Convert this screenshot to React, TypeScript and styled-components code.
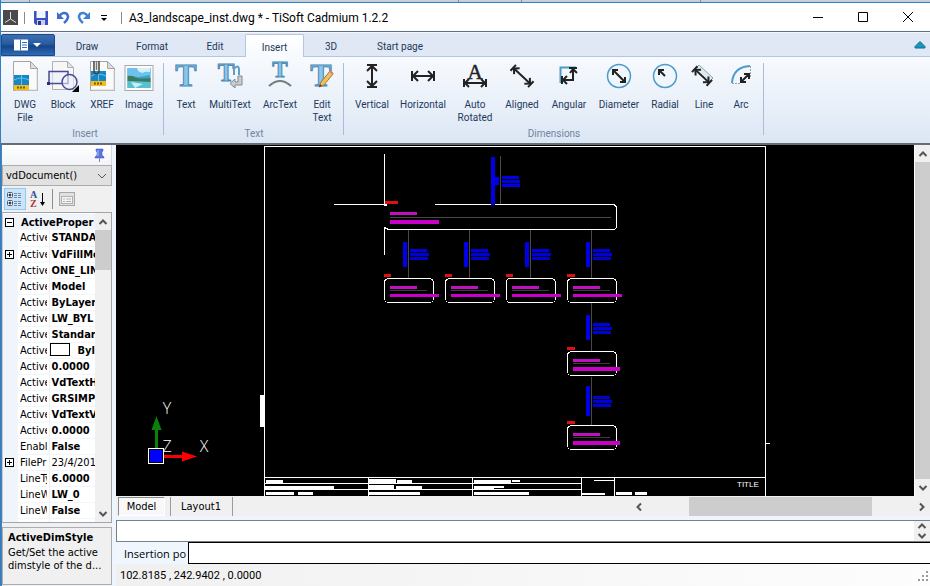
import React from 'react';
import styled, { createGlobalStyle, css } from 'styled-components';

const UI = `'Roboto', 'Open Sans', sans-serif`;
const FORM = `'DejaVu Sans Condensed', 'DejaVu Sans', sans-serif`;

const GlobalStyle = createGlobalStyle`
  * { box-sizing: border-box; }
  body { margin: 0; background: #f0f0f0; font-family: ${UI}; font-size: 11px; color: #000; }
  button, input, select { font: inherit; color: inherit; margin: 0; padding: 0; border: 0; background: none; border-radius: 0; }
  svg { display: block; flex: none; overflow: visible; }
`;

/* ---------- window ---------- */
const Window = styled.div`
  display: flex;
  flex-direction: column;
  height: 100vh;
  overflow: hidden;
  border-left: 1px solid #2f7fc4;
  background: #eff5fc;
`;
const Backdrop = styled.div`
  display: flex;
  flex: none;
  height: 3px;
  background: #c6cfdb;
  border-bottom: 1px solid #3480bf;
`;
const BackdropTab = styled.span<{ $width: number }>`
  width: ${p => p.$width}px;
  border-right: 1px solid #8494a8;
`;
const TitleBar = styled.header`
  display: flex;
  flex: none;
  align-items: center;
  height: 29px;
  padding: 2px 0 0 2px;
  background: #fff;
  border-bottom: 1px solid #5e6f88;
`;
const QuickButton = styled.button<{ $width: number }>`
  display: flex;
  justify-content: center;
  align-items: center;
  width: ${p => p.$width}px;
  height: 20px;
`;
const Divider = styled.span`
  width: 1px;
  height: 12px;
  margin: 0 7px 0 5px;
  background: #8a8a8a;
`;
const Title = styled.h1`
  flex: 1;
  margin: 0;
  font-size: 12px;
  line-height: 20px;
  font-weight: 400;
  white-space: nowrap;
`;
const WindowButton = styled.button`
  display: flex;
  align-self: flex-start;
  justify-content: center;
  align-items: center;
  width: 45px;
  height: 24px;
`;

/* ---------- ribbon ---------- */
const TabBar = styled.nav`
  display: flex;
  flex: none;
  align-items: flex-end;
  height: 25px;
  padding-right: 4px;
  background: #dfe8f4;
  border-top: 1px solid #f4f7fb;
  border-bottom: 1px solid #b5c7de;
`;
const AppButton = styled.button`
  display: flex;
  align-items: center;
  justify-content: center;
  gap: 5px;
  width: 54px;
  height: 22px;
  padding-right: 2px;
  background: linear-gradient(#3b6eb0, #2a5ba3 45%, #164489 55%, #2f6cb5);
  border: 1px solid #1d4785;
  border-radius: 2px 2px 0 0;
`;
const Tab = styled.button<{ $width: number; $active?: boolean }>`
  width: ${p => p.$width}px;
  height: 22px;
  padding-top: 2px;
  font-size: 10px;
  color: #1e395b;
  ${p => p.$active && css`
    height: 23px;
    margin-bottom: -1px;
    background: linear-gradient(#fff, #f6fafe);
    border: 1px solid #b5c7de;
    border-bottom: 0;
    border-radius: 2px 2px 0 0;
  `}
`;
const Spacer = styled.span`
  flex: 1;
`;
const CollapseButton = styled.button`
  display: flex;
  align-items: center;
  justify-content: center;
  width: 12px;
  height: 22px;
`;
const Ribbon = styled.div`
  display: flex;
  flex: none;
  height: 88px;
  padding-left: 5px;
  background: linear-gradient(#f7fafe, #e9f0f9 55%, #dbe6f4);
  border-bottom: 2px solid #656d78;
`;
const Group = styled.section`
  display: flex;
  flex-direction: column;
  position: relative;
  padding: 4px 4px 0;
  &::after {
    content: '';
    position: absolute;
    right: 0;
    top: 6px;
    bottom: 8px;
    width: 1px;
    background: #a9bcd8;
  }
`;
const Tools = styled.div`
  display: flex;
  height: 66px;
`;
const Tool = styled.button<{ $width: number }>`
  display: flex;
  flex-direction: column;
  align-items: center;
  width: ${p => p.$width}px;
  font-size: 10px;
  line-height: 13px;
  color: #1e395b;
`;
const ToolLabel = styled.span`
  display: block;
  margin-top: 5px;
  white-space: pre-line;
  text-align: center;
`;
const GroupName = styled.h2`
  margin: 0;
  font-size: 10px;
  line-height: 13px;
  font-weight: 400;
  text-align: center;
  color: #73849e;
`;

/* ---------- properties ---------- */
const Body = styled.div`
  display: flex;
  flex: 1;
  min-height: 0;
`;
const Side = styled.aside`
  display: flex;
  flex-direction: column;
  flex: none;
  width: 111px;
  padding-bottom: 1px;
  background: #f0f0f0;
  border-left: 1px solid #4d80ae;
  font-family: ${FORM};
`;
const PanelHead = styled.div`
  display: flex;
  justify-content: flex-end;
  align-items: center;
  height: 20px;
  padding-right: 5px;
  background: linear-gradient(#fff, #f2f4f9);
  border-right: 1px solid #d4d8e0;
`;
const SelectBox = styled.label`
  display: grid;
  height: 21px;
  background: #e1e1e1;
  border: 1px solid #acacac;
  align-items: center;
  svg { grid-area: 1 / 1; justify-self: end; margin-right: 4px; pointer-events: none; }
`;
const Select = styled.select`
  grid-area: 1 / 1;
  width: 100%;
  height: 19px;
  padding-left: 3px;
  appearance: none;
`;
const PanelTools = styled.div`
  display: flex;
  align-items: center;
  gap: 1px;
  height: 26px;
  padding-left: 2px;
`;
const PanelTool = styled.button<{ $active?: boolean }>`
  display: flex;
  align-items: center;
  justify-content: center;
  width: 22px;
  height: 22px;
  border: 1px solid ${p => (p.$active ? '#90c8f6' : 'transparent')};
  background: ${p => (p.$active ? '#cce4f7' : 'transparent')};
`;
const PanelRule = styled.span`
  width: 1px;
  height: 20px;
  margin: 0 2px;
  background: #8c8c8c;
`;
const GridBox = styled.div`
  display: flex;
  flex: 1;
  min-height: 0;
  overflow: hidden;
  background: #fff;
  border: 1px solid #a0a4ab;
  border-left-color: #c5cad3;
`;
const GridClip = styled.div`
  flex: 1;
  min-width: 0;
  overflow: hidden;
`;
const PropTable = styled.table`
  width: 100%;
  table-layout: fixed;
  border-collapse: collapse;
  margin-top: 1px;
`;
const PropCell = styled.td<{ $kind: 'mark' | 'name' | 'value' | 'plain' | 'head' }>`
  height: 16px;
  padding: 0;
  overflow: hidden;
  white-space: nowrap;
  line-height: 15px;
  ${p => p.$kind === 'mark' && css`width: 15px; background: #f0f5fb; padding-left: 2px;`}
  ${p => p.$kind === 'name' && css`width: 31px; border-right: 1px solid #edf1f7; border-bottom: 1px solid #f2f5f9; padding-left: 2px;`}
  ${p => (p.$kind === 'value' || p.$kind === 'plain') && css`padding-left: 2px; border-bottom: 1px solid #f2f5f9;`}
  ${p => p.$kind === 'value' && css`font-weight: 700;`}
  ${p => p.$kind === 'head' && css`padding-left: 3px; font-weight: 700; background: #f0f5fb;`}
`;
const NameText = styled.span`
  display: block;
  width: 27px;
  overflow: hidden;
`;
const Expander = styled.button`
  display: flex;
  width: 9px;
  height: 9px;
  background: #fff;
  border: 1px solid #000;
`;
const Swatch = styled.span`
  display: inline-block;
  width: 20px;
  height: 13px;
  margin: 0 8px 0 -2px;
  border: 1px solid #000;
  vertical-align: top;
`;
const Help = styled.div`
  flex: none;
  height: 58px;
  margin-top: 4px;
  padding: 3px 5px;
  border: 1px solid #a9adb4;
  line-height: 13px;
`;
const HelpTitle = styled.strong`
  display: block;
  margin-bottom: 2px;
`;

/* ---------- scroll bars ---------- */
const VScroll = styled.div<{ $width: number }>`
  display: flex;
  flex-direction: column;
  flex: none;
  width: ${p => p.$width}px;
  background: #f0f0f0;
`;
const ScrollButton = styled.button<{ $size: number }>`
  display: flex;
  flex: none;
  align-items: center;
  justify-content: center;
  width: 100%;
  height: ${p => p.$size}px;
`;
const VThumb = styled.div<{ $rest: number }>`
  flex: 1;
  min-height: 0;
  background: #cdcdcd;
  margin-bottom: ${p => p.$rest}px;
`;
const HScroll = styled.div`
  display: flex;
  flex: 0 1 299px;
  height: 19px;
`;
const HArrow = styled.button`
  display: flex;
  align-items: center;
  justify-content: center;
  width: 16px;
  height: 20px;
`;
const HTrack = styled.div`
  flex: 1;
  padding: 0 14%;
`;
const HThumb = styled.div`
  height: 19px;
  background: #cdcdcd;
`;

/* ---------- work area ---------- */
const Work = styled.main`
  display: flex;
  flex-direction: column;
  flex: 1;
  min-width: 0;
  margin-left: 4px;
`;
const Stage = styled.div`
  display: flex;
  flex: 1;
  min-height: 0;
  background: #000;
  overflow: hidden;
`;
const Canvas = styled.div`
  flex: 1;
  min-width: 0;
  overflow: hidden;
  border-right: 1px solid #fff;
`;
const Sheets = styled.div`
  display: flex;
  flex: none;
  height: 20px;
  padding-top: 1px;
  padding-left: 2px;
  background: #f0f0f0;
  font-family: ${FORM};
`;
const Sheet = styled.button<{ $width: number; $active?: boolean }>`
  width: ${p => p.$width}px;
  height: 19px;
  border-right: 1px solid #9b9b9b;
  ${p => p.$active && css`
    margin-right: 5px;
    background: #f8f8f8;
    border: 1px solid #8a8a8a;
    border-right-color: #fff;
    border-bottom-color: #fff;
    box-shadow: 5px 0 0 #f0f0f0, 6px 0 0 #9b9b9b;
  `}
`;
const Command = styled.div`
  display: flex;
  flex: none;
  height: 22px;
  margin-top: 4px;
  background: #fff;
  border: 1px solid #7a7f87;
  border-right: 0;
`;
const CommandInput = styled.input`
  flex: 1;
  min-width: 0;
  padding: 0 4px;
`;
const Prompt = styled.label`
  display: flex;
  flex: none;
  align-items: center;
  height: 22px;
  padding-left: 8px;
  background: #eff6fe;
  font-family: 'Open Sans', sans-serif;
`;
const PromptText = styled.span`
  width: 64px;
  white-space: nowrap;
`;
const PromptInput = styled.input`
  flex: 1;
  min-width: 0;
  height: 22px;
  padding: 0 4px;
  background: #fff;
  border: 1px solid #000;
  border-right: 0;
`;
const Status = styled.footer`
  display: flex;
  flex: none;
  align-items: center;
  justify-content: space-between;
  height: 22px;
  padding: 0 1px 0 4px;
  background: linear-gradient(90deg, #f0f0f0, #fdfdfd);
`;

/* ---------- icons ---------- */
const INK = '#222';
const SKY = '#4d9bcb';

function Icon({ children, size = 32 }: { children: React.ReactNode; size?: number }) {
  return <svg width={size} height={size} viewBox={`0 0 ${size} ${size}`} aria-hidden="true">{children}</svg>;
}

function Page() {
  return (
    <g>
      <path d="M4.500 .5h17l7 7v22h-24z" fill="#fafafa" stroke="#a5a5a5" />
      <path d="M6 29h22M28 9v20" stroke="#d5d5d5" fill="none" />
      <path d="M21.500 .5v7h7z" fill="#dedede" stroke="#a5a5a5" />
    </g>
  );
}

function DwgBadge({ y }: { y: number }) {
  return (
    <g>
      <rect x="5" y={y} width="15" height="10" fill="#1687c4" />
      <path d={`M5 ${y + 5}q7 -4 15 0M12.500 ${y}v10`} stroke="#5fc3ee" fill="none" />
      <rect x="5" y={y + 10} width="15" height="5" fill="#f2bd1d" />
      <path d={`M8 ${y + 12.5}h9`} stroke="#7a5c05" strokeWidth="2" strokeDasharray="2 1" />
    </g>
  );
}

function BlueT({ x, y, size }: { x: number; y: number; size: number }) {
  return (
    <text x={x} y={y} fontFamily="'Liberation Serif', serif" fontWeight="700" fontSize={size} textAnchor="middle"
      fill="#8ac6ea" stroke="#4a87b5" strokeWidth="1">T</text>
  );
}

/* Double-headed dimension arrow centred on the origin, pointing along x. */
function DimArrow({ half, head = 5 }: { half: number; head?: number }) {
  return (
    <g stroke={INK} strokeWidth="2" fill="none">
      <path d={`M${-half + 1} 0H${half - 1}`} />
      <path d={`M${-half + 1 + head} ${-head}L${-half + 1} 0l${head} ${head}M${half - 1 - head} ${-head}L${half - 1} 0l${-head} ${head}`} />
      <path d={`M${-half} ${-head}v${head * 2}M${half} ${-head}v${head * 2}`} />
    </g>
  );
}

const icons: Record<string, React.ReactNode> = {
  dwg: <><Page /><DwgBadge y={14} /></>,
  block: (
    <>
      <path d="M5.500 .5h15l6 6v22h-21z" fill="#f7f7f7" stroke="#b0b0b0" />
      <path d="M20.500 .5v6h6z" fill="#e4e4e4" stroke="#b0b0b0" />
      <rect x="2" y="10.500" width="19" height="12" fill="#eef0fa" fillOpacity=".6" stroke="#4a4a94" strokeWidth="1.500" />
      <circle cx="22.500" cy="21" r="7.500" fill="#eef0fa" fillOpacity=".6" stroke="#4a4a94" strokeWidth="1.500" />
      <rect x="0" y="21" width="3" height="3" fill="#2d2d80" />
      <path d="M32 24v7h-7z" fill="#000" />
    </>
  ),
  xref: (
    <>
      <Page /><DwgBadge y={10} />
      <path d="M8 0v10q0 3 2.500 3t2.500 -3V0" stroke="#444" strokeWidth="1.500" fill="none" />
      <path d="M10.500 0v9" stroke="#777" strokeWidth="1.500" />
    </>
  ),
  image: (
    <>
      <rect x="2" y="4.500" width="28" height="25" fill="#fcfcfc" stroke="#a8a8a8" />
      <rect x="4.500" y="7" width="23" height="20" fill="#3aa0d8" />
      <path d="M4.500 7h23v7l-12 2l-11 -1z" fill="#6cc2ec" />
      <path d="M14 7l13 0v4q-6 -1 -7 1q-6 -1 -6 -5z" fill="#d5f0fa" />
      <path d="M4.500 15q5 -1 9 2q6 1 14 0v4l-23 -1z" fill="#3d7a58" />
      <path d="M4.500 20l23 1v6h-23z" fill="#57c0cf" />
      <path d="M8 21l12 2l-8 4z" fill="#c6eff0" />
    </>
  ),
  text: <BlueT x={16} y={25} size={32} />,
  multi: (
    <>
      <BlueT x={12} y={20} size={25} />
      <path d="M20 5v9M20 8q4 -5 5 0v6" stroke="#5f9fca" strokeWidth="2" fill="none" />
      <path d="M24 15h4v9h-7v3l-5 -4.500l5 -4.500v3h3z" fill="#c9ced1" stroke="#83898c" />
    </>
  ),
  arc: (
    <>
      <BlueT x={16} y={16} size={23} />
      <path d="M5 25q11 -10 22 0" stroke="#777c80" strokeWidth="2" fill="none" />
    </>
  ),
  edit: (
    <>
      <BlueT x={15} y={25} size={32} />
      <path d="M13 26l2 -5l9 -11l3 3l-9 11z" fill="#f0c060" stroke="#a9742c" />
      <path d="M13 26l1 -3l2 2z" fill="#444" />
      <path d="M24 10l3 3" stroke="#d77d77" strokeWidth="2" />
    </>
  ),
  vertical: <g transform="translate(16 15) rotate(90)"><DimArrow half={11} /></g>,
  horizontal: <g transform="translate(16 15)"><DimArrow half={11} /></g>,
  rotated: (
    <>
      <text x="16" y="18" textAnchor="middle" fontFamily="'Liberation Serif', serif" fontSize="21" fill="#222" stroke="#222" strokeWidth=".5">A</text>
      <g transform="translate(16 22)"><DimArrow half={11} head={4} /></g>
    </>
  ),
  aligned: <g transform="translate(16 15) rotate(43)"><DimArrow half={12} head={4} /></g>,
  angular: (
    <>
      <path d="M7.500 22V6.500H23" stroke={SKY} strokeWidth="2" fill="none" />
      <path d="M20 9v10H11" stroke={INK} strokeWidth="2" fill="none" />
      <path d="M17 12l3 -4l4 4M14 15l-4 4l4 4M16 7h8M9 15v8" stroke={INK} strokeWidth="2" fill="none" />
    </>
  ),
  diameter: (
    <>
      <circle cx="16" cy="15" r="11.500" fill="#eff7fc" stroke={SKY} strokeWidth="1.500" />
      <path d="M10 9l12 12M10 14V9h5M22 16v5h-5" stroke={INK} strokeWidth="2" fill="none" />
    </>
  ),
  radial: (
    <>
      <circle cx="16" cy="15" r="11.500" fill="#eff7fc" stroke={SKY} strokeWidth="1.500" />
      <path d="M10 9l6 6M10 14V9h5" stroke={INK} strokeWidth="2" fill="none" />
    </>
  ),
  line: (
    <>
      <path d="M11 4l14 13l-4 4L7 8z" fill="#dfeaf0" stroke="#8ba5b3" />
      <g transform="translate(14 15) rotate(43)"><DimArrow half={10} head={4} /></g>
    </>
  ),
  arcdim: (
    <>
      <path d="M7 22Q8 6 25 5" stroke={SKY} strokeWidth="2" fill="none" />
      <path d="M25.500 5v12M7 22.500h9" stroke="#9aa3aa" strokeDasharray="2 1" />
      <path d="M16 21l8 -8M19 13h5v5M16 16v5h5" stroke={INK} strokeWidth="2" fill="none" />
    </>
  ),
};

function Chevron({ dir }: { dir: 'up' | 'down' | 'left' | 'right' }) {
  const d = { up: 'M1.500 7l3.500 -3.500l3.500 3.500', down: 'M1.500 3l3.500 3.500l3.500 -3.500', left: 'M7 1.500l-3.500 3.500l3.500 3.500', right: 'M3 1.500l3.500 3.500l-3.500 3.500' }[dir];
  return <Icon size={10}><path d={d} stroke="#555" strokeWidth="2" fill="none" /></Icon>;
}

/* ---------- data ---------- */
type ToolDef = [icon: string, label: string, width: number];
const groups: { name: string; tools: ToolDef[] }[] = [
  { name: 'Insert', tools: [['dwg', 'DWG\nFile', 30], ['block', 'Block', 46], ['xref', 'XREF', 32], ['image', 'Image', 42]] },
  { name: 'Text', tools: [['text', 'Text', 36], ['multi', 'MultiText', 52], ['arc', 'ArcText', 48], ['edit', 'Edit\nText', 36]] },
  {
    name: 'Dimensions',
    tools: [['vertical', 'Vertical', 48], ['horizontal', 'Horizontal', 54], ['rotated', 'Auto\nRotated', 50], ['aligned', 'Aligned', 44],
      ['angular', 'Angular', 50], ['diameter', 'Diameter', 50], ['radial', 'Radial', 42], ['line', 'Line', 36], ['arcdim', 'Arc', 38]],
  },
];

const properties: { name: string; value: string; expand?: boolean; plain?: boolean; swatch?: boolean }[] = [
  { name: 'Active', value: 'STANDA' },
  { name: 'Active', value: 'VdFillMo', expand: true },
  { name: 'Active', value: 'ONE_LIN' },
  { name: 'Active', value: 'Model' },
  { name: 'Active', value: 'ByLayer' },
  { name: 'Active', value: 'LW_BYL' },
  { name: 'Active', value: 'Standar' },
  { name: 'Active', value: 'Byl', swatch: true },
  { name: 'Active', value: '0.0000' },
  { name: 'Active', value: 'VdTextH' },
  { name: 'Active', value: 'GRSIMP' },
  { name: 'Active', value: 'VdTextV' },
  { name: 'Active', value: '0.0000' },
  { name: 'Enabl', value: 'False' },
  { name: 'FilePr', value: '23/4/201', expand: true, plain: true },
  { name: 'LineTy', value: '6.0000' },
  { name: 'LineW', value: 'LW_0' },
  { name: 'LineW', value: 'False' },
  { name: 'Ortho', value: 'None' },
];

/* ---------- drawing ---------- */
function Block({ x, y, red = 7, wide = 49 }: { x: number; y: number; red?: number; wide?: number }) {
  return (
    <g>
      <rect x={x + .5} y={y + .5} width="49" height="24" rx="4" fill="none" stroke="#fff" />
      <rect x={x} y={y - 4} width={red} height="3" fill="#e01010" />
      <rect x={x + 6} y={y + 12} width="37" height="1" fill="#3c3c3c" />
      <rect x={x + 6} y={y + 8} width="27" height="3" fill="#c010c0" />
      <rect x={x + 6} y={y + 16} width={wide} height={wide > 48 ? 3 : 4} fill="#c800c8" />
    </g>
  );
}

function Link({ x, y, length, bar, barLength, notes }: {
  x: number; y: number; length: number; bar: number; barLength: number; notes: number;
}) {
  return (
    <g>
      <rect x={x} y={y} width="1" height={length} fill="#484848" />
      <rect x={x - 5} y={bar} width="4" height={barLength} fill="#0000e8" />
      <rect x={x + 2} y={notes} width="17" height="3" fill="#0000d8" />
      <rect x={x + 2} y={notes + 4} width="19" height="3" fill="#0000d8" />
      <rect x={x + 2} y={notes + 8} width="18" height="3" fill="#0000d8" />
    </g>
  );
}

const tableMarks: [number, number, number, number][] = [
  [266, 480, 17, 3], [264, 486, 70, 3], [266, 492, 28, 3], [298, 492, 15, 3],
  [369, 479, 27, 4], [397, 480, 15, 3], [369, 485, 25, 4], [396, 486, 26, 3], [369, 492, 51, 3],
  [474, 480, 37, 3], [512, 480, 8, 2], [474, 486, 20, 3], [494, 486, 10, 2], [474, 492, 55, 3],
  [582, 493, 23, 2], [594, 480, 20, 1], [616, 492, 16, 3], [635, 492, 12, 3],
];

function Drawing() {
  return (
    <svg width="100%" height="100%" viewBox="116 145 798 351" preserveAspectRatio="xMinYMin meet" shapeRendering="crispEdges" role="img" aria-label="Drawing">
      <g fill="#fff">
        <rect x="264" y="146" width="502" height="1" />
        <rect x="264" y="146" width="1" height="350" />
        <rect x="765" y="146" width="1" height="350" />
        <rect x="260" y="395" width="4" height="32" />
        <rect x="766" y="443" width="4" height="1" />
        <rect x="384" y="154" width="1" height="52" />
        <rect x="384" y="228" width="1" height="27" />
        <rect x="334" y="204" width="52" height="1" />
        <rect x="384" y="203" width="3" height="3" />
        <rect x="264" y="477" width="502" height="1" />
        <rect x="264" y="483" width="318" height="1" />
        <rect x="264" y="489" width="318" height="1" />
        <rect x="368" y="477" width="1" height="19" />
        <rect x="472" y="477" width="1" height="19" />
        <rect x="581" y="477" width="1" height="19" />
        <rect x="614" y="477" width="1" height="19" />
        {tableMarks.map(([x, y, w, h]) => <rect key={`${x}-${y}`} x={x} y={y} width={w} height={h} />)}
      </g>
      <text x="737" y="487" fontFamily="'Liberation Sans', sans-serif" fontSize="8" fill="#fff">TITLE</text>

      <path d="M435 204.500H612.500q4 0 4 4v17q0 4 -4 4H388.500l-4 -2" fill="none" stroke="#fff" />
      <rect x="390" y="217" width="221" height="1" fill="#484848" />
      <rect x="385" y="201" width="13" height="3" fill="#e01010" />
      <rect x="390" y="212" width="27" height="3" fill="#c010c0" />
      <rect x="390" y="220" width="49" height="4" fill="#c800c8" />
      <rect x="500" y="156" width="1" height="48" fill="#484848" />
      <g fill="#0000e8">
        <rect x="491" y="157" width="4" height="48" />
        <rect x="495" y="177" width="4" height="8" />
        <rect x="502" y="176" width="17" height="3" />
        <rect x="502" y="180" width="18" height="3" />
        <rect x="502" y="184" width="18" height="3" />
      </g>

      <Link x={408} y={230} length={48} bar={242} barLength={25} notes={249} />
      <Link x={469} y={230} length={48} bar={242} barLength={25} notes={249} />
      <Link x={530} y={230} length={48} bar={242} barLength={25} notes={249} />
      <Link x={591} y={230} length={48} bar={242} barLength={25} notes={249} />
      <Link x={591} y={303} length={48} bar={315} barLength={25} notes={323} />
      <Link x={591} y={377} length={48} bar={386} barLength={30} notes={396} />
      <Block x={384} y={278} />
      <Block x={445} y={278} />
      <Block x={506} y={278} />
      <Block x={567} y={278} red={8} />
      <Block x={567} y={351} red={8} wide={47} />
      <Block x={567} y={425} red={8} wide={47} />

      <g shapeRendering="auto">
        <rect x="155" y="430" width="3" height="19" fill="#0a7f0a" />
        <path d="M156.500 416l5 14h-10z" fill="#0a7f0a" />
        <rect x="164" y="455" width="18" height="3" fill="#f00" />
        <path d="M197 456.500l-15 -5v10z" fill="#f00" />
        <rect x="148.500" y="448.500" width="15" height="15" fill="#000" stroke="#fff" />
        <rect x="150" y="450" width="12" height="12" fill="#00f" />
        <g fontFamily="'Open Sans', sans-serif" fontWeight="300" fontSize="16" fill="#fff" textAnchor="middle">
          <text x="167" y="414">Y</text>
          <text x="167" y="452">Z</text>
          <text x="204" y="452">X</text>
        </g>
      </g>
    </svg>
  );
}

export default function App() {
  return (
    <>
      <GlobalStyle />
      <Window>
        <Backdrop>
          <BackdropTab $width={29} /><BackdropTab $width={429} /><BackdropTab $width={63} /><BackdropTab $width={179} />
        </Backdrop>
        <TitleBar>
          <Icon size={16}>
            <rect width="15" height="15" fill="#4a4a4a" />
            <path d="M7.500 2v7L2 12.500M7.500 9l5.500 3.500" stroke="#ddd" fill="none" />
          </Icon>
          <Divider />
          <QuickButton $width={18} aria-label="Save">
            <Icon size={16}>
              <path d="M1 1h14v14H3l-2 -2z" fill="#3b50c0" />
              <path d="M3.500 1h9v7h-9z" fill="#f2f5ff" />
              <path d="M4 10h8v5H4z" fill="#c5cdf2" /><path d="M5 11h3v4H5z" fill="#26368f" />
            </Icon>
          </QuickButton>
          <QuickButton $width={26} aria-label="Undo">
            <Icon size={16}>
              <path d="M4 6.500Q8 1 12 4q3 4 -3 9" stroke="#3a6fd0" strokeWidth="2.500" fill="none" />
              <path d="M2 2v7h7z" fill="#3a6fd0" />
            </Icon>
          </QuickButton>
          <QuickButton $width={16} aria-label="Redo">
            <Icon size={16}>
              <path d="M12 6.500Q8 1 4 4q-3 4 3 9" stroke="#3f82d2" strokeWidth="2.500" fill="none" />
              <path d="M14 2v7H7z" fill="#3f82d2" />
            </Icon>
          </QuickButton>
          <QuickButton $width={24} aria-label="Customize">
            <Icon size={8}><path d="M1 1.500h6" stroke="#000" /><path d="M1 4h6l-3 3z" /></Icon>
          </QuickButton>
          <Divider />
          <Title>A3_landscape_inst.dwg * - TiSoft Cadmium 1.2.2</Title>
          <WindowButton aria-label="Minimize"><Icon size={12}><path d="M1 6.500h10" stroke="#000" /></Icon></WindowButton>
          <WindowButton aria-label="Maximize"><Icon size={12}><path d="M1.500 1.500h9v9h-9z" stroke="#000" fill="none" /></Icon></WindowButton>
          <WindowButton aria-label="Close"><Icon size={12}><path d="M1 1l10 10M11 1L1 11" stroke="#000" /></Icon></WindowButton>
        </TitleBar>

        <TabBar>
          <AppButton aria-label="Application menu">
            <Icon size={14}>
              <path d="M0 1.500h14v11H0z" fill="#fff" /><path d="M6.500 1.500v11" stroke="#3b6eb0" />
              <path d="M8 4.500h5M8 7h5M8 9.500h5" stroke="#3b6eb0" />
            </Icon>
            <Icon size={8}><path d="M0 2h8l-4 4z" fill="#fff" /></Icon>
          </AppButton>
          <Tab $width={64}>Draw</Tab>
          <Tab $width={66}>Format</Tab>
          <Tab $width={60}>Edit</Tab>
          <Tab $width={59} $active>Insert</Tab>
          <Tab $width={54}>3D</Tab>
          <Tab $width={84}>Start page</Tab>
          <Spacer />
          <CollapseButton aria-label="Collapse ribbon">
            <Icon size={12}><path d="M1 9V7.500l5 -5l5 5V9z" fill="#1c96b8" stroke="#0d6d92" /></Icon>
          </CollapseButton>
        </TabBar>

        <Ribbon>
          {groups.map(g => (
            <Group key={g.name}>
              <Tools>
                {g.tools.map(([icon, label, width]) => (
                  <Tool key={label} $width={width}>
                    <Icon>{icons[icon]}</Icon>
                    <ToolLabel>{label}</ToolLabel>
                  </Tool>
                ))}
              </Tools>
              <GroupName>{g.name}</GroupName>
            </Group>
          ))}
        </Ribbon>

        <Body>
          <Side>
            <PanelHead>
              <Icon size={14}>
                <path d="M4 1h7v2l-1 1v3l2 2v1H3V9l2 -2V4L4 3z" fill="#5a74e0" stroke="#3c55bd" strokeWidth=".5" />
                <path d="M6 2v6" stroke="#a9b9ff" /><path d="M7.500 10v4" stroke="#808aa8" />
              </Icon>
            </PanelHead>
            <SelectBox>
              <Select aria-label="Object" defaultValue="doc"><option value="doc">vdDocument()</option></Select>
              <Icon size={10}><path d="M1 3l4 4l4 -4" stroke="#555" fill="none" /></Icon>
            </SelectBox>
            <PanelTools>
              <PanelTool $active aria-label="Categorized">
                <Icon size={18}>
                  <g fill="#fff" stroke="#3d5d8c"><rect x="1.500" y="2.500" width="5" height="5" rx="1" /><rect x="1.500" y="10.500" width="5" height="5" rx="1" /></g>
                  <path d="M2.500 5h3M4 3.500v3M2.500 13h3M4 11.500v3" stroke="#000" />
                  <path d="M8 3.500h8M8 5.500h8M8 7.500h8M8 11.500h8M8 13.500h8M8 15.500h8" stroke="#6d89ad" strokeDasharray="3 1" />
                </Icon>
              </PanelTool>
              <PanelTool aria-label="Alphabetical">
                <Icon size={18}>
                  <g fontFamily="'Liberation Serif', serif" fontWeight="700" fontSize="10">
                    <text x="1" y="8" fill="#2e4e9e">A</text><text x="1" y="17" fill="#a33a3a">Z</text>
                  </g>
                  <path d="M13.500 3v12" stroke="#000" /><path d="M11 12h5l-2.500 4z" />
                </Icon>
              </PanelTool>
              <PanelRule />
              <PanelTool aria-label="Property pages">
                <Icon size={18}>
                  <rect x="1.500" y="2.500" width="15" height="13" fill="#e0e0e0" stroke="#a8a8a8" />
                  <rect x="3.500" y="6.500" width="11" height="7" fill="#f6f6f6" stroke="#b0b0b0" />
                  <path d="M5 9h2M8 9h5M5 11.500h2M8 11.500h5" stroke="#b0b0b0" />
                </Icon>
              </PanelTool>
            </PanelTools>
            <GridBox>
              <GridClip>
                <PropTable>
                  <colgroup><col width="15" /><col width="31" /><col /></colgroup>
                  <tbody>
                    <tr>
                      <PropCell $kind="mark"><Expander aria-label="Collapse"><Icon size={7}><path d="M1 3.500h5" stroke="#000" /></Icon></Expander></PropCell>
                      <PropCell $kind="head" colSpan={2}>ActiveProper</PropCell>
                    </tr>
                    {properties.map((p, i) => (
                      <tr key={i}>
                        <PropCell $kind="mark">
                          {p.expand && <Expander aria-label={`Expand ${p.name}`}><Icon size={7}><path d="M1 3.500h5M3.500 1v5" stroke="#000" /></Icon></Expander>}
                        </PropCell>
                        <PropCell $kind="name"><NameText>{p.name}</NameText></PropCell>
                        <PropCell $kind={p.plain ? 'plain' : 'value'}>{p.swatch && <Swatch />}{p.value}</PropCell>
                      </tr>
                    ))}
                  </tbody>
                </PropTable>
              </GridClip>
              <VScroll $width={16}>
                <ScrollButton $size={17} aria-label="Scroll up"><Chevron dir="up" /></ScrollButton>
                <VThumb $rest={235} />
                <ScrollButton $size={17} aria-label="Scroll down"><Chevron dir="down" /></ScrollButton>
              </VScroll>
            </GridBox>
            <Help>
              <HelpTitle>ActiveDimStyle</HelpTitle>
              Get/Set the active dimstyle of the d...
            </Help>
          </Side>

          <Work>
            <Stage>
              <Canvas><Drawing /></Canvas>
              <VScroll $width={15}>
                <ScrollButton $size={17} aria-label="Scroll up"><Chevron dir="up" /></ScrollButton>
                <VThumb $rest={0} />
                <ScrollButton $size={17} aria-label="Scroll down"><Chevron dir="down" /></ScrollButton>
              </VScroll>
            </Stage>
            <Sheets>
              <Sheet $width={47} $active>Model</Sheet>
              <Sheet $width={63}>Layout1</Sheet>
              <Spacer />
              <HScroll>
                <HArrow aria-label="Scroll left"><Chevron dir="left" /></HArrow>
                <HTrack><HThumb /></HTrack>
                <HArrow aria-label="Scroll right"><Chevron dir="right" /></HArrow>
              </HScroll>
            </Sheets>
            <Command>
              <CommandInput aria-label="Command history" />
              <VScroll $width={16}>
                <ScrollButton $size={10} aria-label="Previous"><Chevron dir="up" /></ScrollButton>
                <ScrollButton $size={10} aria-label="Next"><Chevron dir="down" /></ScrollButton>
              </VScroll>
            </Command>
            <Prompt>
              <PromptText>Insertion po</PromptText>
              <PromptInput />
            </Prompt>
            <Status>
              <span>102.8185 , 242.9402 , 0.0000</span>
              <Icon size={12}>
                <path d="M9 2h2v2h-2zM9 6h2v2h-2zM9 10h2v2h-2zM5 6h2v2h-2zM5 10h2v2h-2zM1 10h2v2h-2z" fill="#9a9a9a" />
              </Icon>
            </Status>
          </Work>
        </Body>
      </Window>
    </>
  );
}
